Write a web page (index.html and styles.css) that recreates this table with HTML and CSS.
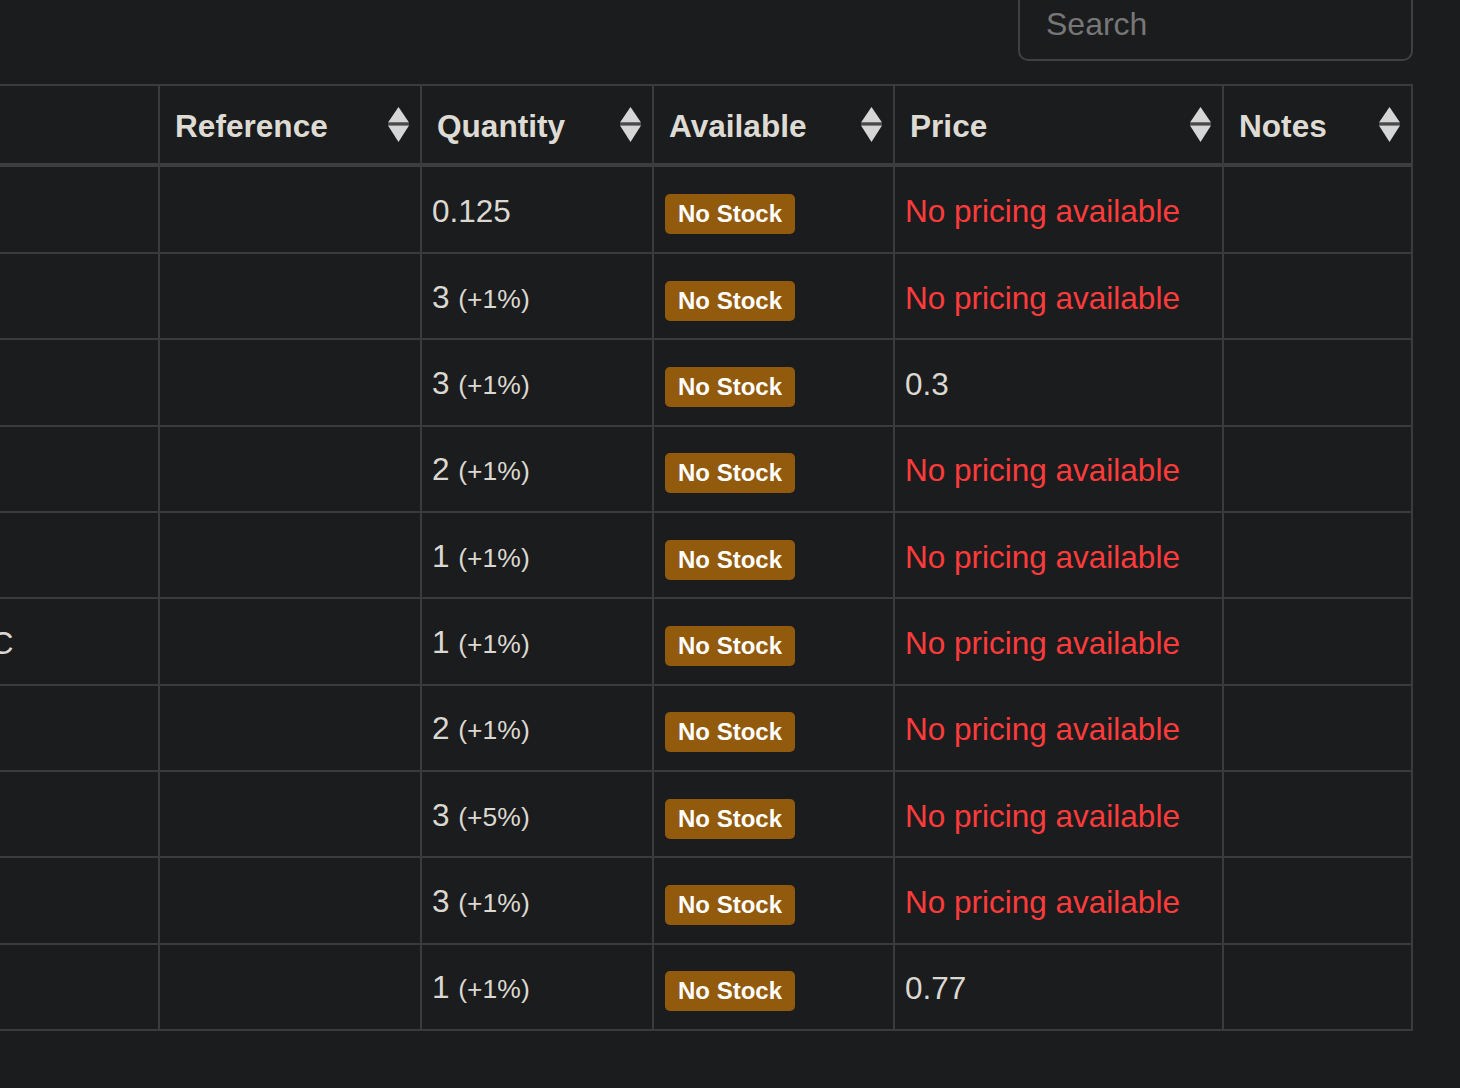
FILE: index.html
```html
<!DOCTYPE html>
<html lang="en">
<head>
<meta charset="utf-8">
<title>Parts</title>
<link rel="stylesheet" href="styles.css">
</head>
<body>
<div class="page">
  <div class="toolbar">
    <input class="search" type="text" placeholder="Search">
  </div>
  <table class="parts">
    <thead>
      <tr>
        <th class="c-part"></th>
        <th class="c-ref"><div class="th-inner"><span class="th-label">Reference</span><svg class="sort" viewBox="0 0 21 35" width="21" height="35"><polygon points="10.5,0 21,15.6 0,15.6"/><rect class="sort-gap" x="0" y="15.8" width="21" height="2.6"/><polygon points="0,18.6 21,18.6 10.5,35"/></svg></div></th>
        <th class="c-qty"><div class="th-inner"><span class="th-label">Quantity</span><svg class="sort" viewBox="0 0 21 35" width="21" height="35"><polygon points="10.5,0 21,15.6 0,15.6"/><rect class="sort-gap" x="0" y="15.8" width="21" height="2.6"/><polygon points="0,18.6 21,18.6 10.5,35"/></svg></div></th>
        <th class="c-avail"><div class="th-inner"><span class="th-label">Available</span><svg class="sort" viewBox="0 0 21 35" width="21" height="35"><polygon points="10.5,0 21,15.6 0,15.6"/><rect class="sort-gap" x="0" y="15.8" width="21" height="2.6"/><polygon points="0,18.6 21,18.6 10.5,35"/></svg></div></th>
        <th class="c-price"><div class="th-inner"><span class="th-label">Price</span><svg class="sort" viewBox="0 0 21 35" width="21" height="35"><polygon points="10.5,0 21,15.6 0,15.6"/><rect class="sort-gap" x="0" y="15.8" width="21" height="2.6"/><polygon points="0,18.6 21,18.6 10.5,35"/></svg></div></th>
        <th class="c-notes"><div class="th-inner"><span class="th-label">Notes</span><svg class="sort" viewBox="0 0 21 35" width="21" height="35"><polygon points="10.5,0 21,15.6 0,15.6"/><rect class="sort-gap" x="0" y="15.8" width="21" height="2.6"/><polygon points="0,18.6 21,18.6 10.5,35"/></svg></div></th>
      </tr>
    </thead>
    <tbody>
      <tr class="first"><td></td><td></td><td>0.125</td><td><span class="badge">No Stock</span></td><td class="no-price">No pricing available</td><td></td></tr>
      <tr><td></td><td></td><td>3 <small>(+1%)</small></td><td><span class="badge">No Stock</span></td><td class="no-price">No pricing available</td><td></td></tr>
      <tr><td></td><td></td><td>3 <small>(+1%)</small></td><td><span class="badge">No Stock</span></td><td>0.3</td><td></td></tr>
      <tr><td></td><td></td><td>2 <small>(+1%)</small></td><td><span class="badge">No Stock</span></td><td class="no-price">No pricing available</td><td></td></tr>
      <tr><td></td><td></td><td>1 <small>(+1%)</small></td><td><span class="badge">No Stock</span></td><td class="no-price">No pricing available</td><td></td></tr>
      <tr><td class="part-name">ADC</td><td></td><td>1 <small>(+1%)</small></td><td><span class="badge">No Stock</span></td><td class="no-price">No pricing available</td><td></td></tr>
      <tr><td></td><td></td><td>2 <small>(+1%)</small></td><td><span class="badge">No Stock</span></td><td class="no-price">No pricing available</td><td></td></tr>
      <tr><td></td><td></td><td>3 <small>(+5%)</small></td><td><span class="badge">No Stock</span></td><td class="no-price">No pricing available</td><td></td></tr>
      <tr><td></td><td></td><td>3 <small>(+1%)</small></td><td><span class="badge">No Stock</span></td><td class="no-price">No pricing available</td><td></td></tr>
      <tr><td></td><td></td><td>1 <small>(+1%)</small></td><td><span class="badge">No Stock</span></td><td>0.77</td><td></td></tr>
    </tbody>
  </table>
</div>
</body>
</html>
```

FILE: styles.css
```css
html, body {
  margin: 0;
  padding: 0;
  background: #1b1c1e;
  overflow: hidden;
}

body {
  font-family: "Liberation Sans", Arial, Helvetica, sans-serif;
  font-size: 31.5px;
  line-height: 48px;
  color: #dbd8d1;
}

.page {
  padding-right: 47px;
}

.toolbar {
  display: flex;
  justify-content: flex-end;
  margin-top: -14px;
  margin-bottom: 23px;
}

.search {
  box-sizing: border-box;
  width: 395px;
  height: 75px;
  margin: 0;
  padding: 2px 20px 0 26px;
  border: 2px solid #3f4042;
  border-radius: 10px;
  background: #1b1c1e;
  color: #dbd8d1;
  font-family: inherit;
  font-size: 32px;
  outline: none;
}

.search::placeholder {
  color: #777777;
}

.parts {
  table-layout: fixed;
  border-collapse: separate;
  border-spacing: 0;
  width: 1480px;
  margin-left: -67px;
  border-top: 2px solid #3a3b3c;
  border-left: 2px solid #3a3b3c;
}

.parts th,
.parts td {
  box-sizing: border-box;
  border-right: 2px solid #3a3b3c;
  border-bottom: 2px solid #3a3b3c;
  white-space: nowrap;
  overflow: hidden;
}

.parts th {
  height: 81px;
  padding: 0 11px 0 15px;
  border-bottom: 4px solid #3d3e40;
  text-align: left;
  font-size: 31.6px;
  font-weight: bold;
  color: #dedbd4;
  vertical-align: middle;
}

.c-part { width: 225px; }
.c-ref { width: 262px; }
.c-qty { width: 232px; }
.c-avail { width: 241px; }
.c-price { width: 329px; }
.c-notes { width: 189px; }

.th-inner {
  display: flex;
  align-items: center;
  justify-content: space-between;
}

.th-label {
  padding-top: 3px;
}

.sort {
  display: block;
  flex: none;
  fill: #d6d6d6;
}

.sort-gap {
  fill: #4a4a4a;
}

.parts td {
  height: 86.33px;
  padding: 3px 10px 0 10px;
  vertical-align: middle;
}

.parts tr.first td {
  height: 87px;
}

.parts td.part-name {
  padding-left: 12px;
}

.parts td small {
  font-size: 26.5px;
}

.no-price {
  color: #ff3b3b;
}

.badge {
  display: inline-block;
  padding: 8px 13px;
  margin-left: 1px;
  font-size: 24px;
  line-height: 24px;
  font-weight: bold;
  color: #ffffff;
  background: #925a0d;
  border-radius: 5px;
}
```
